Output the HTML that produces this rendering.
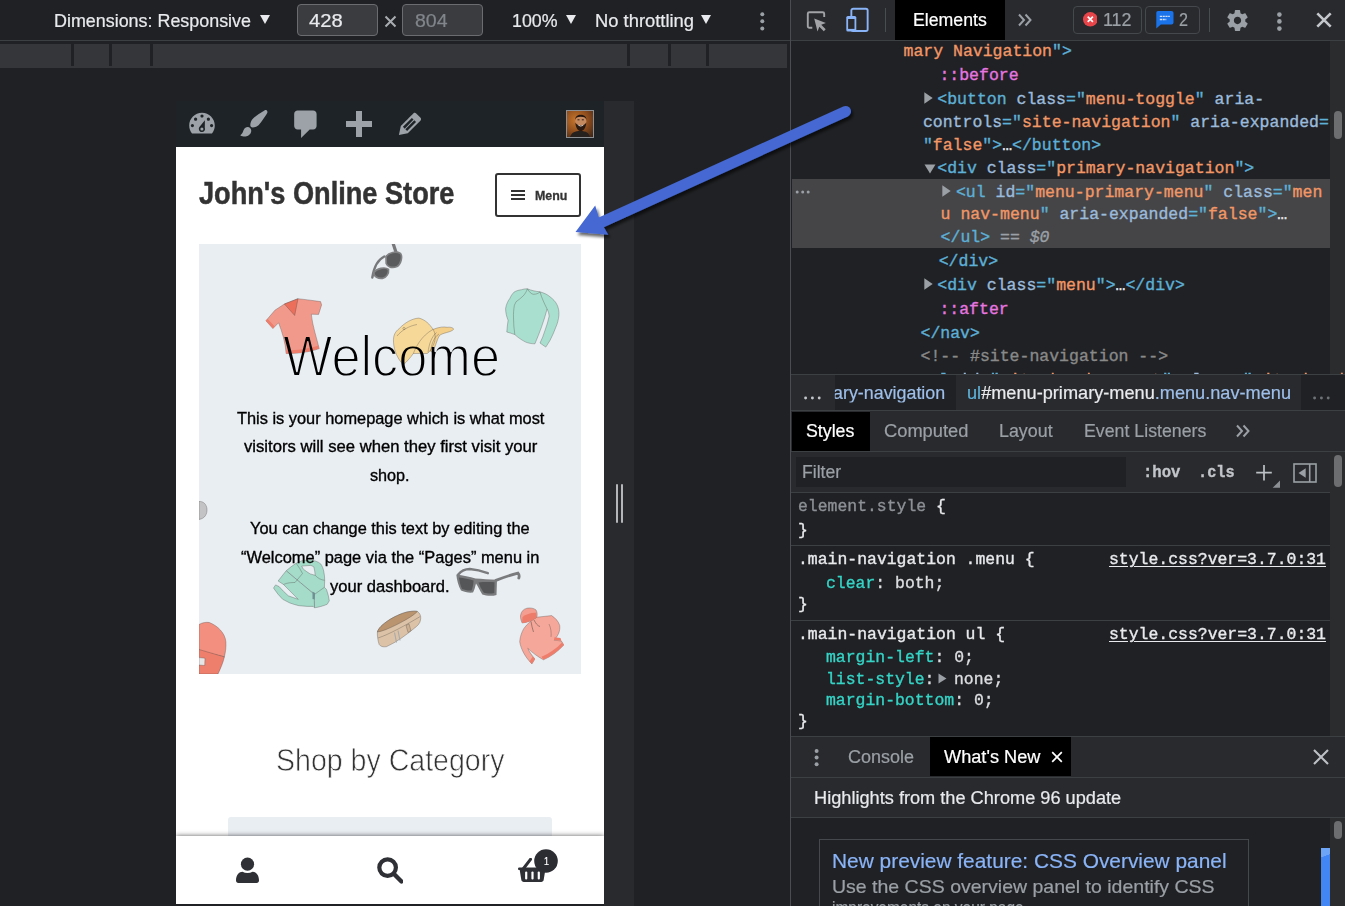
<!DOCTYPE html>
<html lang="en"><head><meta charset="utf-8"><title>DevTools</title>
<style>
*{box-sizing:border-box;margin:0;padding:0}
html,body{width:1345px;height:906px;overflow:hidden;background:#202124}
body{font-family:"Liberation Sans",sans-serif;position:relative}
#root{position:absolute;left:0;top:0;width:1345px;height:906px;overflow:hidden;background:#202124}
.a{position:absolute}
.t{position:absolute;white-space:pre;transform-origin:0 0;display:block}
.t i{font-style:normal}
.clip{position:absolute;left:0;top:0;width:1345px;overflow:hidden}
.tri{position:absolute;width:0;height:0;border-left:5.2px solid transparent;border-right:5.2px solid transparent;border-top:9px solid #e8eaed}
.inp{position:absolute;top:4px;height:32px;background:#3b3c3f;border:1px solid #6a6c70;border-radius:4px}
.hl{position:absolute;height:1px;background:#3c4043}
.t{line-height:1}
.s{font-family:"Liberation Sans",sans-serif;-webkit-text-stroke:0.2px}
.m{font-family:"Liberation Mono",monospace;-webkit-text-stroke:0.35px;margin-top:0.9px}

</style></head>
<body>
<div id="root">
<svg width="0" height="0" style="position:absolute"><defs>
<mask id="mw" maskUnits="userSpaceOnUse" x="0" y="0" width="1345" height="906"><text x="283" y="375.800" font-family="Liberation Sans, sans-serif" font-size="57.3" textLength="217" lengthAdjust="spacingAndGlyphs" fill="#fff" stroke="#000" stroke-width="1.900" stroke-linejoin="round">Welcome</text></mask>
<mask id="ms" maskUnits="userSpaceOnUse" x="0" y="0" width="1345" height="906"><text x="276" y="771.300" font-family="Liberation Sans, sans-serif" font-size="31.400" textLength="228.500" lengthAdjust="spacingAndGlyphs" fill="#fff" stroke="#000" stroke-width="0.850" stroke-linejoin="round">Shop by Category</text></mask>
</defs></svg>

<!-- ================= LEFT: device mode ================= -->
<div class="a" id="left" style="left:0;top:0;width:790px;height:906px;background:#202124"></div>
<div class="hl" style="left:0;top:40px;width:790px"></div>
<div class="a" style="left:790px;top:0;width:1px;height:906px;background:#494c50"></div>
<!-- toolbar widgets -->
<div class="tri" style="left:259.8px;top:15px"></div>
<div class="inp" style="left:297.4px;width:81px"></div>
<svg class="a" style="left:384px;top:15px" width="13" height="13" viewBox="0 0 13 13"><path d="M1.5 1.5L11.5 11.5M11.5 1.5L1.5 11.5" stroke="#a9acb1" stroke-width="2" fill="none"/></svg>
<div class="inp" style="left:402.4px;width:80.4px"></div>
<div class="tri" style="left:566px;top:15px"></div>
<div class="tri" style="left:701.3px;top:15px"></div>
<svg class="a" style="left:758px;top:10px" width="9" height="22" viewBox="0 0 9 22"><g fill="#9aa0a6"><circle cx="4.3" cy="4.3" r="2"/><circle cx="4.3" cy="11.2" r="2"/><circle cx="4.3" cy="18.4" r="2"/></g></svg>
<!-- media query bar -->
<div class="a" style="left:0;top:44px;width:787px;height:24px;background:#35363a"></div>
<div class="a" style="left:71px;top:44px;width:3px;height:22px;background:#202124"></div>
<div class="a" style="left:109px;top:44px;width:3px;height:22px;background:#202124"></div>
<div class="a" style="left:150px;top:44px;width:3px;height:22px;background:#202124"></div>
<div class="a" style="left:627.3px;top:44px;width:3px;height:22px;background:#202124"></div>
<div class="a" style="left:668.3px;top:44px;width:3px;height:22px;background:#202124"></div>
<div class="a" style="left:706.4px;top:44px;width:3px;height:22px;background:#202124"></div>

<!-- resizer strip -->
<div class="a" style="left:604px;top:101px;width:30px;height:805px;background:#292a2d"></div>
<div class="a" style="left:615.6px;top:484px;width:2px;height:39px;background:#b4b6b9;border-radius:1px"></div>
<div class="a" style="left:621.3px;top:484px;width:2px;height:39px;background:#b4b6b9;border-radius:1px"></div>

<!-- ================= device ================= -->
<div class="a" id="device" style="left:176px;top:101px;width:428px;height:803px;background:#fff;overflow:hidden">
  <!-- wp admin bar -->
  <div class="a" style="left:0;top:0;width:428px;height:46px;background:#1d2327"></div>
  <svg class="a" style="left:10.300000000000011px;top:7px;" width="32" height="32" viewBox="0 0 20 20"><path d="M3.76 16h12.48c1.1-1.37 1.76-3.11 1.76-5 0-4.42-3.58-8-8-8s-8 3.58-8 8c0 1.89.66 3.63 1.76 5zM10 4c.55 0 1 .45 1 1s-.45 1-1 1-1-.45-1-1 .45-1 1-1zM6 6c.55 0 1 .45 1 1s-.45 1-1 1-1-.45-1-1 .45-1 1-1zM14 6c.55 0 1 .45 1 1s-.45 1-1 1-1-.45-1-1 .45-1 1-1zM4 10c.55 0 1 .45 1 1s-.45 1-1 1-1-.45-1-1 .45-1 1-1zM16 10c.55 0 1 .45 1 1s-.45 1-1 1-1-.45-1-1 .45-1 1-1z" fill="#9ca2a7"/></svg><svg class="a" style="left:10.300000000000011px;top:7px;" width="32" height="32" viewBox="0 0 20 20"><path d="M11.800 7.700L11.750 12.300A1.950 1.950 0 1 1 8.250 12.100z" fill="#1d2327"/><circle cx="9.950" cy="13.150" r="0.950" fill="#9ca2a7"/></svg><svg class="a" style="left:61.900000000000006px;top:6.400000000000006px;" width="32" height="32" viewBox="0 0 20 20"><path d="M18.33 3.57s.27-.8-.31-1.36c-.53-.52-1.22-.24-1.22-.24-.61.3-5.76 3.47-7.67 5.57-.86.96-2.06 3.79-1.09 4.82.92.98 3.96-.17 4.79-1 2.060-2.060 5.21-7.170 5.5-7.790zM1.4 17.650c2.37-1.560 1.46-3.410 3.230-4.640.93-.65 2.220-.62 3.080.29.630.66.8 1.850.25 2.960-.38.780-1.160 1.630-2.610 2.060-.92.27-2.480.34-3.950-.67z" fill="#9ca2a7"/></svg><svg class="a" style="left:112.5px;top:5.700000000000003px;" width="34.5" height="34.5" viewBox="0 0 20 20"><path d="M5 2h9c1.1 0 2 .9 2 2v7c0 1.100-.9 2-2 2h-2l-5 5v-5h-2c-1.100 0-2-.9-2-2v-7c0-1.100.9-2 2-2z" fill="#9ca2a7"/></svg><svg class="a" style="left:162px;top:6.400000000000006px;" width="40" height="40" viewBox="0 0 20 20"><path d="M17 7v3h-5v5h-3v-5h-5v-3h5v-5h3v5h5z" fill="#9ca2a7"/></svg><svg class="a" style="left:218px;top:6.799999999999997px;" width="32" height="32" viewBox="0 0 20 20"><path d="M13.89 3.39l2.710 2.720c.46.46.42 1.240.030 1.640l-8.010 8.020-5.560 1.160 1.160-5.580s7.600-7.630 7.990-8.030c.39-.39 1.220-.39 1.680.07zM11.160 6.180l-5.590 5.610 1.110 1.110 5.540-5.650zM8.190 14.410l5.580-5.600-1.070-1.080-5.590 5.600z" fill="#9ca2a7"/></svg>
  <!-- avatar -->
  <svg class="a" style="left:390px;top:9px;" width="28" height="28" viewBox="0 0 28 28">
<defs><radialGradient id="avg" cx="0.35" cy="0.35" r="0.9"><stop offset="0" stop-color="#c9772c"/><stop offset="0.55" stop-color="#8a4a1c"/><stop offset="1" stop-color="#3a2416"/></radialGradient></defs>
<rect width="28" height="28" fill="#8c8f94"/><rect x="1" y="1" width="26" height="26" fill="url(#avg)"/>
<path d="M4 27c1.500-4.500 5-6 10.500-6s8.500 2 9.500 6z" fill="#26201f"/>
<ellipse cx="14.800" cy="11.500" rx="5.600" ry="6.800" fill="#c58a60"/>
<path d="M9.200 10c-.5-7 11.700-7 11.200 0-.4-2.300-2-3.300-5.600-3.300S9.600 7.700 9.200 10z" fill="#24150f"/>
<path d="M9.300 12.500c.4 6 3 8.500 5.500 8.500s5.100-2.500 5.500-8.500c-1.200 2-3 2.800-5.500 2.800s-4.300-.8-5.500-2.800z" fill="#2a1a12"/>
<path d="M12 14.800c1.800 1.100 3.800 1.100 5.600 0-1 2.300-4.600 2.300-5.600 0z" fill="#f4ebe4"/>
<path d="M11.500 9.800h2M15.800 9.800h2" stroke="#24150f" stroke-width=".9"/>
</svg>
  <!-- menu button -->
  <div class="a" style="left:319px;top:72px;width:86px;height:44px;border:2px solid #333;border-radius:3px"></div>
  <div class="a" style="left:335px;top:88.6px;width:14px;height:2.1px;background:#333"></div>
  <div class="a" style="left:335px;top:93px;width:14px;height:2.1px;background:#333"></div>
  <div class="a" style="left:335px;top:97.3px;width:14px;height:2.1px;background:#333"></div>
  <!-- hero -->
  <div class="a" id="hero" style="left:23px;top:143px;width:382px;height:430px;background:#e9eef3;overflow:hidden">
  <svg class="a" style="left:0;top:0" width="382" height="430" viewBox="0 0 382 430"><g>
<path d="M194.300 0L197.400 9.500" stroke="#77787a" stroke-width="3.200" stroke-linecap="round" fill="none"/>
<path d="M185.300 12.500C178 16 174.800 24 173.300 33.500" stroke="#77787a" stroke-width="2.400" stroke-linecap="round" fill="none"/>
<path d="M187 12.500C190 8.500 197 6.800 201.500 9.500 203.800 12.500 202 20 198 22.500 193 24.500 188.500 23 187.200 19.500z" fill="#5a5b5d" stroke="#808183" stroke-width="1.700"/>
<path d="M174.800 28.500C177.500 24.500 186 22.500 189.500 25.500 190 29.500 187.500 33.500 183.500 34.300 179.500 34.800 174.800 33 174.800 28.500z" fill="#5a5b5d" stroke="#808183" stroke-width="1.700"/>
</g><g>
<path d="M66.900 76.800L75.900 66.200 85.400 60 99 54.700 109 55.900 121.600 57.600 122.600 60.900 119.600 70.400 112.300 70.200C113.500 82 118 95 120.200 104.600 110 108.500 97 109.500 87.100 109.600 86.500 98 83 88 79.600 78.800L73.900 84.500z" fill="#f19a8c" stroke="#4a4440" stroke-opacity=".55" stroke-width=".6" stroke-linejoin="round"/>
<path d="M85.400 60L99 54.700 95.700 71.500z" fill="#ec6f5c" stroke="#4a4440" stroke-opacity=".55" stroke-width=".6" stroke-linejoin="round"/>
<path d="M87.100 109.600C97 109.500 110 108.500 120.200 104.600L119.300 101.500C110 105 97 106.300 87 106.300z" fill="#ee7d6b"/>
<path d="M66.900 76.800L73.900 84.500 75.800 82.600 68.500 74.800z" fill="#ee7d6b"/>
</g><g>
<path d="M234 85.400C240 83 245 82.500 248.200 83.300 252 82.800 254.800 84 254.500 85.400 252 88.500 244 88.500 240.500 91.500 237.500 96 237 103 233 108L226 104z" fill="#f3cf8a" stroke="#4a4440" stroke-opacity=".55" stroke-width=".6" stroke-linejoin="round"/>
<path d="M194.500 98.200C194 91 196.500 87.500 200.100 84.700 206 78.500 213 74.500 219.900 74.100 226 75.500 231 80.500 234 85.400 236.500 89 236.500 94 235.400 98.200 233.500 103 231.500 107 228.400 109.500L214.300 109.500C211.500 113.500 208 117.500 204.400 120.800 198.500 115 194.800 106 194.500 98.200z" fill="#f6d899" stroke="#4a4440" stroke-opacity=".55" stroke-width=".6" stroke-linejoin="round"/>
<path d="M214.300 109.500C217 103 222 92 234 85.400" fill="none" stroke="#4a4440" stroke-opacity=".55" stroke-width=".6" stroke-linejoin="round"/>
<path d="M198 92C203 86 210 82 218 80.500" fill="none" stroke="#4a4440" stroke-opacity=".55" stroke-width=".6" stroke-linejoin="round"/>
<path d="M231.500 107C233 99 235 93 240 90M229 108.500C230 100 232.500 93 237.500 88.500" fill="none" stroke="#4a4440" stroke-opacity=".55" stroke-width=".6" stroke-linejoin="round"/>
<circle cx="205" cy="84.500" r="1.100" fill="none" stroke="#4a4440" stroke-opacity=".55" stroke-width=".6" stroke-linejoin="round"/>
</g><g>
<path d="M328.400 44.800C332.500 46.500 337 47.500 341 47.800 345 49 348.500 50.500 351 52.800 354 55 356.300 57.500 357.800 60.300 359.500 63.500 360.200 67.500 359.900 71.300 359.500 75.500 358.500 79.500 356.900 83 355.300 87.500 353.300 92 351 96.400L346.800 103.100 341 99C343 95 344.700 90.800 346 86.400 347.800 81.500 349.300 76.800 350.200 72.100 350 69.500 349.300 67 348.100 65 345 77 340.500 89 335.900 99.800 332.500 99.800 329.500 99.200 326.700 98.100 322.500 96 319 93.500 315.800 90.600 313 89.500 310.300 88.700 307.800 88 308 84 308.600 80 309.100 76.300 307.500 72.500 306.600 68.500 306.600 64.500 307.300 60.500 308.800 57 310.800 54.500 311.800 52 313.200 50 314.900 48.200 317.200 46.800 319.800 46 322.500 45.700 324.500 45 326.500 44.700 328.400 44.800z" fill="#a9dfce" stroke="#4a4440" stroke-opacity=".55" stroke-width=".6" stroke-linejoin="round"/>
<path d="M328.400 44.800C327.500 47.500 326 50 324.200 51.900 322 54.200 319.300 56 317 57.800L315.400 61.200C314.700 65.500 314.300 69.700 314.500 73.800 314.500 79.500 315 85 315.800 90.600" fill="none" stroke="#4a4440" stroke-opacity=".55" stroke-width=".6" stroke-linejoin="round"/>
<path d="M341 47.800C341.800 51 343 54 344.300 57 345.500 59.800 346.800 62.500 348.100 65" fill="none" stroke="#4a4440" stroke-opacity=".55" stroke-width=".6" stroke-linejoin="round"/>
<path d="M328.400 44.800C330.500 48.200 332.300 50 334.300 50.300 337 50.300 339.500 49.500 341 47.800" fill="none" stroke="#4a4440" stroke-opacity=".55" stroke-width=".6" stroke-linejoin="round"/>
</g><path d="M0 257.500C4 257 7.500 260 8 265 8.300 270 6 274.500 0 275.500z" fill="#c3c3c5" stroke="#4a4440" stroke-opacity=".55" stroke-width=".6" stroke-linejoin="round"/><g>
<path d="M79.100 337L87.200 326.700C90.300 324 93.700 321.500 97.100 319.300L102.700 316.800C105.500 316.200 108.300 315.800 111.200 315.800L116.900 317.200C118.800 317.800 120.500 318.800 121.800 320 123.300 322.200 124.200 324.600 124.700 327.100 125.400 330 125.700 333.200 125.700 336.300L125.400 343.300 127.500 345.500C128.800 349.200 129.800 353 130.300 356.800L128.200 360.300C124 362 119.800 363.200 115.500 363.800L114.100 362.400H108.400L99.900 361.700C96.800 361 93.700 360 90.700 358.900L83.700 355.300C80.300 352 77.200 348.200 74.500 344L76.600 340.900 80.100 342.600C83 345.800 86 349 89.300 351.800L99.200 355.300 84.500 340.500 79.100 337z" fill="#a4dbc9" stroke="#4a4440" stroke-opacity=".55" stroke-width=".6" stroke-linejoin="round"/>
<path d="M102.700 322.100L111.900 321.400 114.800 322.800C115.500 325.500 116 328.300 116.200 331.300L111.200 329.900C108.800 328.500 106.400 326.800 104.200 325z" fill="#e9eef3" stroke="#4a4440" stroke-opacity=".55" stroke-width=".6" stroke-linejoin="round"/>
<path d="M87.200 326.700C96.500 334.500 106 342.500 115.500 350.400 115.300 354.500 115.300 359 115.500 363.800" fill="none" stroke="#8a9a97" stroke-width="1"/>
<path d="M97.100 319.300C99.500 322.500 101.800 325.800 103.500 329.500L96 338.500C92 338.500 88 338.800 84.500 340.500" fill="none" stroke="#4a4440" stroke-opacity=".55" stroke-width=".6" stroke-linejoin="round"/>
<path d="M116.200 331.300C119 334.500 122.300 336 125.700 336.300" fill="none" stroke="#4a4440" stroke-opacity=".55" stroke-width=".6" stroke-linejoin="round"/>
<path d="M115.500 350.400L125.400 343.300" fill="none" stroke="#4a4440" stroke-opacity=".55" stroke-width=".6" stroke-linejoin="round"/>
<path d="M113.500 347.500l2.500 1.500-.5 6.500-2-.5z" fill="#6f8f93"/>
</g><g>
<path d="M259.300 330.500C262 327 266.500 325 270.800 325 277 325.500 283 327 288.800 329.100" stroke="#7a7b7d" stroke-width="2.600" stroke-linecap="round" fill="none"/>
<path d="M296.900 336.400C304 333.500 311.500 331 319 329.100 320.300 330.500 320.300 332.500 319.800 334" stroke="#7a7b7d" stroke-width="2.800" stroke-linecap="round" fill="none"/>
<path d="M257.300 330.500C264 331.500 271 332.500 276.500 334.500 283 335 290 335.300 298 335.800L297.500 351C293 352.500 287 351.800 283.300 350.500 280.500 346 279 342 277 339.500 276 343 275.500 346 274 348.500 270 349 265 348 262 346.500 259.500 342 257.800 336 257.300 330.500z" fill="#7a7b7d"/>
<path d="M260 333.500C265 334 270 335 274.500 336.500 274.500 340.500 273.500 344 272.500 346.500 269 346.800 265.500 346 263 345 261.500 341.500 260.500 337.500 260 333.500z" fill="#555658"/>
<path d="M279.500 338.500C284.500 338 290 338 295.500 338.300L295.300 349C291.500 350 287.500 349.500 284.800 348.700 282.500 345.500 280.800 342 279.500 338.500z" fill="#555658"/>
</g><g>
<path d="M178.400 388C180 381 196 371 208 368 213 367 217 367 218.400 367.500 221 369 222 372 221.700 374.900 221.300 380 218 382 215 384.500 207 391 198 398 187.400 402.700 184 403.200 181.500 402.500 180.200 400.500 178.800 396.500 178.200 392 178.400 388z" fill="#dcc3a7" stroke="#4a4440" stroke-opacity=".55" stroke-width=".6" stroke-linejoin="round"/>
<path d="M178.400 388C180 381 196 371 208 368 213 367 217 367 218.400 367.500 214 372 205 377 197 381 190 384.500 183 387.500 178.400 388z" fill="#b9946f" stroke="#4a4440" stroke-opacity=".55" stroke-width=".6" stroke-linejoin="round"/>
<path d="M179 394C190 390.500 207 381 221.200 372.500" fill="none" stroke="#4a4440" stroke-opacity=".55" stroke-width=".6" stroke-linejoin="round"/>
<path d="M195.500 388.500L197.500 398.500M199 386.500L201 396.500" fill="none" stroke="#a7a9ac" stroke-width="1.100"/>
<path d="M207 381.500L209 388.500 212 386.800 210 379.800z" fill="#cdb092" stroke="#4a4440" stroke-opacity=".55" stroke-width=".6" stroke-linejoin="round"/>
</g><g>
<path d="M0 380.500C3.500 378.500 7 378 10.400 378.500 19 382 26 389 26.900 397.800 27.300 403 26.500 408 25.400 412.900L0 407z" fill="#f28f7e" stroke="#4a4440" stroke-opacity=".55" stroke-width=".6" stroke-linejoin="round"/>
<path d="M0 405.500L25.400 412.900C24 419 21.500 424.500 19 430L0 430z" fill="#ef7f6d" stroke="#4a4440" stroke-opacity=".55" stroke-width=".6" stroke-linejoin="round"/>
<path d="M0 413.600L6 414.200 5.700 421.500 0 421z" fill="#e6e6e6" stroke="#4a4440" stroke-opacity=".55" stroke-width=".6" stroke-linejoin="round"/>
</g><g>
<path d="M324.700 384.700C328 380 333 375.500 337.800 373.200L352.600 371.600C356.500 374 359.500 377.500 360.700 381.400 361.500 387 359 392 355 396.100L362.400 397 364.800 401C359 407.500 352 412.500 344.400 415.800 338.500 412.500 333 408.500 328.800 404.300 330.500 408.500 333.500 412 335.900 415L332.900 419.900C327 414 322 406 320.700 397.800 321 393 322.500 388.500 324.700 384.700z" fill="#f5a799" stroke="#4a4440" stroke-opacity=".55" stroke-width=".6" stroke-linejoin="round"/>
<path d="M321.500 371.600C322 367.500 324.500 365 328 364.200 331.500 363.500 335 364.300 337 365.900 338.500 368.500 338.300 371 337.800 373.200 333.500 376.500 328 378.500 323.100 379 322 376.500 321.300 374 321.500 371.600z" fill="#f39e90" stroke="#4a4440" stroke-opacity=".55" stroke-width=".6" stroke-linejoin="round"/>
<path d="M323.500 373C327 370.500 332 368.500 337 368.800L337.800 373.200C333.500 376.500 328 378.500 323.100 379z" fill="#ed7c6a"/>
<path d="M344.400 415.800C352 412.500 359 407.500 364.800 401L363.300 398.300C357.500 404.500 350.500 409.500 342.500 412.800z" fill="#ee7d6b"/>
<path d="M335.900 415L332.900 419.900 330.500 417.500 333.800 412.500z" fill="#ee7d6b"/>
<path d="M355 396.100L362.400 397 361.500 394 355.500 393.300z" fill="#ee7d6b"/>
<path d="M332 377.500C332.500 381 333.500 385 334.500 388M335 376C336.500 379 338.500 382 341 382.500" fill="none" stroke="#8c6a62" stroke-width=".8"/>
<path d="M350 380C352 384 352.500 389 352 393" fill="none" stroke="#4a4440" stroke-opacity=".55" stroke-width=".6" stroke-linejoin="round"/>
</g></svg>
  </div>
  <!-- category tile -->
  <div class="a" style="left:52px;top:716px;width:324px;height:30px;background:#e9eef3;border-radius:3px"></div>
  <!-- handheld footer bar -->
  <div class="a" style="left:0;top:735px;width:428px;height:68px;background:#fff;box-shadow:0 0 5px rgba(0,0,0,.65)"></div>
  <svg class="a" style="left:59.5px;top:756px;" width="23" height="26" viewBox="0 0 23 26"><circle cx="11.5" cy="7.200" r="6.600" fill="#2f3036"/><path d="M0 23.500c0-6 3.200-8.800 6.500-8.800 1.500.8 3.100 1.200 5 1.200s3.500-.4 5-1.200c3.300 0 6.500 2.800 6.500 8.800 0 1.400-1 2.500-2.400 2.500H2.400C1 26 0 24.900 0 23.500z" fill="#2f3036"/></svg><svg class="a" style="left:200.5px;top:756px;" width="26.5" height="26.5" viewBox="0 0 26.500 26.500"><circle cx="10.600" cy="10.600" r="8.300" fill="none" stroke="#2f3036" stroke-width="4.200"/><path d="M17 17l7.500 7.500" stroke="#2f3036" stroke-width="4.400" stroke-linecap="round"/></svg><svg class="a" style="left:341.5px;top:757px;" width="29" height="24" viewBox="0 0 29 24"><path d="M1.200 9.500h26.600c.8 0 1.200.6 1.200 1.300s-.5 1.300-1.200 1.300h-.5l-1.600 9.700c-.2 1.300-1.200 2.200-2.500 2.200H5.800c-1.300 0-2.300-.9-2.500-2.200L1.700 12.100h-.5C.5 12.100 0 11.500 0 10.800s.5-1.300 1.200-1.300z" fill="#2f3036"/>
<path d="M5.500 10.500L12.500 1.300" stroke="#2f3036" stroke-width="3" stroke-linecap="round"/>
<g stroke="#fff" stroke-width="2.200" stroke-linecap="round"><path d="M8.200 14.500v6"/><path d="M14.500 14.500v6"/><path d="M20.800 14.500v6"/></g></svg><svg class="a" style="left:358px;top:748px;" width="24" height="24" viewBox="0 0 24 24"><circle cx="12" cy="12" r="11.800" fill="#2c2d33"/></svg>
</div>

<!-- ================= RIGHT: devtools ================= -->
<div class="a" style="left:791px;top:0;width:554px;height:40px;background:#292a2d"></div>
<div class="hl" style="left:791px;top:40px;width:554px"></div>
<svg class="a" style="left:806px;top:10px;" width="22" height="22" viewBox="0 0 22 22"><path d="M6.300 17.700H3.300c-.9 0-1.500-.6-1.500-1.500V3.700c0-.9.600-1.500 1.500-1.500h13.400c.9 0 1.500.6 1.500 1.500v3.400" fill="none" stroke="#a1a3a6" stroke-width="1.900"/><path d="M8.200 8.500l11.700 4.500-4.700 1.800 4.500 4.500-1.900 1.900-4.500-4.500-1.800 4.700z" fill="#a1a3a6"/></svg><svg class="a" style="left:845px;top:7px;" width="25" height="26" viewBox="0 0 25 26"><rect x="6.350" y="1.750" width="16.300" height="22.300" rx="1.800" fill="none" stroke="#8ab4f8" stroke-width="1.900"/><rect x="1.300" y="9" width="10" height="15.600" rx="1.600" fill="#8ab4f8"/><rect x="3.100" y="12" width="6.400" height="9.900" fill="#292a2d"/></svg><div class="a" style="left:885px;top:8px;width:1px;height:24px;background:#494c50"></div><svg class="a" style="left:1017px;top:13px;" width="16" height="14" viewBox="0 0 16 14"><path d="M2 1.500l5 5.500-5 5.500M8.500 1.500l5 5.500-5 5.500" fill="none" stroke="#9aa0a6" stroke-width="2"/></svg><div class="a" style="left:1073px;top:6px;width:68.500px;height:27.500px;border:1px solid #45484c;border-radius:4px"></div><svg class="a" style="left:1082.5px;top:12.2px;" width="14.6" height="14.6" viewBox="0 0 14.600 14.600"><circle cx="7.300" cy="7.300" r="7.300" fill="#e8454a"/><path d="M4.700 4.700l5.200 5.200M9.900 4.700l-5.200 5.200" stroke="#fff" stroke-width="1.700"/></svg><div class="a" style="left:1145px;top:6px;width:54.700px;height:27.500px;border:1px solid #45484c;border-radius:4px"></div><svg class="a" style="left:1156px;top:10.9px;" width="17.5" height="18" viewBox="0 0 17.500 18"><path d="M2 0h13.500c1.100 0 2 .9 2 2v9.500c0 1.100-.9 2-2 2H4.800L.3 17.500V2C.3.900 1 0 2 0z" fill="#1a73e8"/><path d="M3.800 5.300h10M3.800 8.500h6.500" stroke="#cfe0fb" stroke-width="1.300" stroke-dasharray="2.200 .6"/></svg><div class="a" style="left:1209px;top:8px;width:1px;height:24px;background:#494c50"></div><svg class="a" style="left:1224.6px;top:7.6px;" width="25" height="25" viewBox="0 0 24 24"><path fill="#9aa0a6" d="M19.430 12.980c.04-.32.070-.64.070-.98s-.03-.66-.07-.98l2.110-1.650c.19-.15.240-.42.120-.64l-2-3.460c-.12-.22-.39-.3-.61-.22l-2.490 1c-.52-.4-1.080-.73-1.690-.98l-.38-2.650C14.460 2.180 14.250 2 14 2h-4c-.25 0-.46.180-.49.420l-.38 2.650c-.61.250-1.170.59-1.690.98l-2.490-1c-.23-.09-.49 0-.61.220l-2 3.460c-.13.220-.07.490.12.640l2.110 1.650c-.04.320-.07.650-.07.980s.03.660.07.980l-2.110 1.650c-.19.150-.24.420-.12.640l2 3.460c.12.220.39.300.61.220l2.490-1c.52.400 1.080.73 1.690.98l.38 2.650c.03.240.24.420.49.420h4c.25 0 .46-.18.490-.42l.38-2.650c.61-.25 1.170-.59 1.690-.98l2.490 1c.23.090.49 0 .61-.22l2-3.460c.12-.22.070-.49-.12-.64l-2.110-1.650zM12 15.500c-1.930 0-3.500-1.570-3.500-3.500s1.570-3.500 3.500-3.500 3.500 1.570 3.500 3.500-1.570 3.500-3.500 3.500z"/></svg><svg class="a" style="left:1275px;top:10px;" width="9" height="24" viewBox="0 0 9 24"><g fill="#9aa0a6"><circle cx="4.400" cy="4.600" r="2.300"/><circle cx="4.400" cy="11.400" r="2.300"/><circle cx="4.400" cy="18.600" r="2.300"/></g></svg><svg class="a" style="left:1313.7px;top:10.2px;" width="20" height="20" viewBox="0 0 20 20"><path d="M3.300 3.300l13.400 13.400M16.700 3.300l-13.400 13.400" stroke="#c4c7cc" stroke-width="2.600" fill="none"/></svg>
<div class="a" style="left:895px;top:0;width:110px;height:39.5px;background:#000"></div>

<!-- elements tree -->
<div class="a" style="left:1330px;top:41px;width:15px;height:333px;background:#2b2c2e"></div>
<div class="a" style="left:1334px;top:111px;width:8px;height:28px;background:#6d6e70;border-radius:4px"></div>
<div class="a" style="left:792px;top:179px;width:538px;height:68.5px;background:#454547"></div>
<svg class="a" style="left:794px;top:189px" width="18" height="6" viewBox="0 0 18 6"><g fill="#9aa0a6"><circle cx="3.2" cy="3" r="1.5"/><circle cx="8.7" cy="3" r="1.5"/><circle cx="14.2" cy="3" r="1.5"/></g></svg>
<svg class="a" style="left:924.2px;top:92.2px;" width="9" height="12" viewBox="0 0 9 12"><path d="M0.300 0.300L8.700 6 0.300 11.700z" fill="#9aa0a6"/></svg><svg class="a" style="left:924.2px;top:163.5px;" width="12" height="10" viewBox="0 0 12 10"><path d="M0.500 0.500h11L6 9.500z" fill="#9aa0a6"/></svg><svg class="a" style="left:941.7px;top:184.89999999999998px;" width="9" height="12" viewBox="0 0 9 12"><path d="M0.300 0.300L8.700 6 0.300 11.700z" fill="#9aa0a6"/></svg><svg class="a" style="left:924.2px;top:278.2px;" width="9" height="12" viewBox="0 0 9 12"><path d="M0.300 0.300L8.700 6 0.300 11.700z" fill="#9aa0a6"/></svg>
<div class="clip" style="height:374px"><span class="t m" style="left:903.50px;top:43.35px;font-size:16.5px;color:#e8eaed;"><i style="color:#f29766">mary Navigation</i><i style="color:#5db0d7">"&gt;</i></span>
<span class="t m" style="left:939.40px;top:67.35px;font-size:16.5px;color:#e8eaed;"><i style="color:#e776e0">::before</i></span>
<span class="t m" style="left:937.30px;top:91.35px;font-size:16.5px;color:#e8eaed;"><i style="color:#5db0d7">&lt;button</i><i style="color:#9bbbdc"> class</i><i style="color:#5db0d7">="</i><i style="color:#f29766">menu-toggle</i><i style="color:#5db0d7">"</i><i style="color:#9bbbdc"> aria-</i></span>
<span class="t m" style="left:922.90px;top:114.35px;font-size:16.5px;color:#e8eaed;"><i style="color:#9bbbdc">controls</i><i style="color:#5db0d7">="</i><i style="color:#f29766">site-navigation</i><i style="color:#5db0d7">"</i><i style="color:#9bbbdc"> aria-expanded</i><i style="color:#5db0d7">=</i></span>
<span class="t m" style="left:922.90px;top:136.85px;font-size:16.5px;color:#e8eaed;"><i style="color:#5db0d7">"</i><i style="color:#f29766">false</i><i style="color:#5db0d7">"&gt;</i><i style="color:#e8eaed">…</i><i style="color:#5db0d7">&lt;/button&gt;</i></span>
<span class="t m" style="left:937.30px;top:160.35px;font-size:16.5px;color:#e8eaed;"><i style="color:#5db0d7">&lt;div</i><i style="color:#9bbbdc"> class</i><i style="color:#5db0d7">="</i><i style="color:#f29766">primary-navigation</i><i style="color:#5db0d7">"&gt;</i></span>
<span class="t m" style="left:955.90px;top:183.95px;font-size:16.5px;color:#e8eaed;"><i style="color:#5db0d7">&lt;ul</i><i style="color:#9bbbdc"> id</i><i style="color:#5db0d7">="</i><i style="color:#f29766">menu-primary-menu</i><i style="color:#5db0d7">"</i><i style="color:#9bbbdc"> class</i><i style="color:#5db0d7">="</i><i style="color:#f29766">men</i></span>
<span class="t m" style="left:940.60px;top:206.35px;font-size:16.5px;color:#e8eaed;"><i style="color:#f29766">u nav-menu</i><i style="color:#5db0d7">"</i><i style="color:#9bbbdc"> aria-expanded</i><i style="color:#5db0d7">="</i><i style="color:#f29766">false</i><i style="color:#5db0d7">"&gt;</i><i style="color:#e8eaed">…</i></span>
<span class="t m" style="left:940.60px;top:228.85px;font-size:16.5px;color:#e8eaed;"><i style="color:#5db0d7">&lt;/ul&gt;</i><i style="color:#9aa0a6"> == </i><i style="color:#9aa0a6;font-style:italic">$0</i></span>
<span class="t m" style="left:938.70px;top:252.85px;font-size:16.5px;color:#e8eaed;"><i style="color:#5db0d7">&lt;/div&gt;</i></span>
<span class="t m" style="left:937.30px;top:277.35px;font-size:16.5px;color:#e8eaed;"><i style="color:#5db0d7">&lt;div</i><i style="color:#9bbbdc"> class</i><i style="color:#5db0d7">="</i><i style="color:#f29766">menu</i><i style="color:#5db0d7">"&gt;</i><i style="color:#e8eaed">…</i><i style="color:#5db0d7">&lt;/div&gt;</i></span>
<span class="t m" style="left:939.40px;top:301.35px;font-size:16.5px;color:#e8eaed;"><i style="color:#e776e0">::after</i></span>
<span class="t m" style="left:920.50px;top:324.75px;font-size:16.5px;color:#e8eaed;"><i style="color:#5db0d7">&lt;/nav&gt;</i></span>
<span class="t m" style="left:920.50px;top:348.35px;font-size:16.5px;color:#e8eaed;"><i style="color:#898989">&lt;!-- #site-navigation --&gt;</i></span>
<span class="t m" style="left:919.00px;top:372.15px;font-size:16.5px;color:#e8eaed;transform:scaleX(1.0219);"><i style="color:#5db0d7">&lt;ul</i><i style="color:#9bbbdc"> id</i><i style="color:#5db0d7">="</i><i style="color:#f29766">site-header-cart</i><i style="color:#5db0d7">"</i><i style="color:#9bbbdc"> class</i><i style="color:#5db0d7">="</i><i style="color:#f29766">site-header-</i></span>
</div>

<!-- breadcrumbs -->
<div class="hl" style="left:791px;top:374px;width:554px"></div>
<div class="a" style="left:791px;top:375px;width:554px;height:35px;background:#292a2d"></div>
<div class="a" style="left:835px;top:375px;width:121px;height:35px;background:#202124"></div>
<div class="a" style="left:1301px;top:375px;width:44px;height:35px;background:#202124"></div>
<svg class="a" style="left:803px;top:395px" width="20" height="6" viewBox="0 0 20 6"><g fill="#c4c7cc"><circle cx="2.6" cy="3" r="1.45"/><circle cx="9.4" cy="3" r="1.45"/><circle cx="16.2" cy="3" r="1.45"/></g></svg>
<svg class="a" style="left:1312px;top:395px" width="20" height="6" viewBox="0 0 20 6"><g fill="#6f7378"><circle cx="2.6" cy="3" r="1.45"/><circle cx="9.4" cy="3" r="1.45"/><circle cx="16.2" cy="3" r="1.45"/></g></svg>
<div class="hl" style="left:791px;top:410px;width:554px"></div>

<!-- styles tabs -->
<div class="a" style="left:791px;top:411px;width:554px;height:40px;background:#292a2d"></div>
<div class="a" style="left:792px;top:412px;width:78px;height:39px;background:#000"></div>
<div class="hl" style="left:791px;top:451px;width:554px"></div>
<!-- filter row -->
<div class="a" style="left:791px;top:452px;width:539px;height:40px;background:#292a2d"></div>
<div class="a" style="left:796px;top:457px;width:330px;height:30px;background:#202124"></div>
<div class="hl" style="left:791px;top:492px;width:539px"></div>
<svg class="a" style="left:1255px;top:463.5px;" width="27" height="25" viewBox="0 0 27 25"><path d="M9 1v15.500M1.200 8.700h15.600" stroke="#bdc1c6" stroke-width="1.700" fill="none"/><path d="M25 16.500v7.300h-7.300z" fill="#8d9196"/></svg><svg class="a" style="left:1293px;top:463px;" width="24" height="20" viewBox="0 0 24 20"><rect x="1" y="1" width="22" height="18" fill="none" stroke="#9aa0a6" stroke-width="1.600"/><path d="M16.700 1v18" stroke="#9aa0a6" stroke-width="1.600"/><path d="M12.700 5.200v9.600L5.500 10z" fill="#9aa0a6"/></svg><svg class="a" style="left:1234.5px;top:424px;" width="16" height="14" viewBox="0 0 16 14"><path d="M2 1.500l5 5.500-5 5.500M8.500 1.500l5 5.500-5 5.500" fill="none" stroke="#9aa0a6" stroke-width="2"/></svg>
<!-- styles scroll -->
<div class="a" style="left:1330px;top:452px;width:15px;height:284px;background:#2b2c2e"></div>
<div class="a" style="left:1334px;top:455px;width:8px;height:32px;background:#6d6e70;border-radius:4px"></div>
<div class="hl" style="left:791px;top:545px;width:539px"></div>
<div class="hl" style="left:791px;top:620px;width:539px"></div>
<svg class="a" style="left:938px;top:672.5px" width="9" height="11" viewBox="0 0 9 11"><path d="M0.5 0.5L8.5 5.5L0.5 10.5z" fill="#9aa0a6"/></svg>

<!-- drawer -->
<div class="hl" style="left:791px;top:736px;width:554px"></div>
<div class="a" style="left:791px;top:737px;width:554px;height:40px;background:#292a2d"></div>
<div class="a" style="left:930px;top:737px;width:141px;height:39px;background:#000"></div>
<svg class="a" style="left:812px;top:746px" width="9" height="22" viewBox="0 0 9 22"><g fill="#9aa0a6"><circle cx="4.6" cy="5" r="2"/><circle cx="4.6" cy="11.6" r="2"/><circle cx="4.6" cy="18.2" r="2"/></g></svg>
<svg class="a" style="left:1050px;top:750px" width="14" height="14" viewBox="0 0 14 14"><path d="M2.2 2.2L11.8 11.8M11.8 2.2L2.2 11.8" stroke="#fff" stroke-width="1.7" fill="none"/></svg>
<svg class="a" style="left:1312px;top:748px" width="18" height="18" viewBox="0 0 18 18"><path d="M2 2L16 16M16 2L2 16" stroke="#bdc1c6" stroke-width="2.1" fill="none"/></svg>
<div class="hl" style="left:791px;top:777px;width:554px"></div>
<div class="a" style="left:791px;top:778px;width:554px;height:39px;background:#292a2d"></div>
<div class="hl" style="left:791px;top:817px;width:554px"></div>
<div class="a" style="left:1330px;top:818px;width:15px;height:88px;background:#2b2c2e"></div>
<div class="a" style="left:1334px;top:821px;width:8px;height:18px;background:#6d6e70;border-radius:4px"></div>
<div class="a" style="left:819px;top:839px;width:430px;height:80px;border:1px solid #45484c"></div>
<div class="a" style="left:1321px;top:848px;width:9px;height:60px;background:#4285f4"></div>
<div class="a" style="left:1321px;top:848px;width:9px;height:20px;background:linear-gradient(160deg,#6ea4f8 40%,#4285f4 41%)"></div>

<svg class="a" style="left:0;top:0" width="1345" height="906" viewBox="0 0 1345 906"><rect x="270" y="320" width="240" height="70" fill="#000" mask="url(#mw)"/><rect x="265" y="735" width="250" height="50" fill="#333" mask="url(#ms)"/></svg>
<span class="t s" style="left:54.40px;top:12.80px;font-size:17.6px;color:#e8eaed;transform:scaleX(1.0174);">Dimensions: Responsive</span>
<span class="t s" style="left:309.30px;top:12.80px;font-size:17.6px;color:#e8eaed;transform:scaleX(1.1478);">428</span>
<span class="t s" style="left:415.00px;top:12.80px;font-size:17.6px;color:#80868b;transform:scaleX(1.1104);">804</span>
<span class="t s" style="left:511.50px;top:12.80px;font-size:17.6px;color:#e8eaed;transform:scaleX(1.0111);">100%</span>
<span class="t s" style="left:594.80px;top:12.80px;font-size:17.6px;color:#e8eaed;transform:scaleX(1.0437);">No throttling</span>
<span class="t s" style="left:199.40px;top:177.59px;font-size:31.2px;color:#333;font-weight:700;transform:scaleX(0.8707);-webkit-text-stroke:0.5px;">John's Online Store</span>
<span class="t s" style="left:534.60px;top:189.96px;font-size:12.8px;color:#333;font-weight:700;transform:scaleX(0.9694);-webkit-text-stroke:0.3px;">Menu</span>
<span class="t s" style="left:236.60px;top:409.80px;font-size:16.3px;color:#000;transform:scaleX(1.0050);-webkit-text-stroke:0.35px;">This is your homepage which is what most</span>
<span class="t s" style="left:244.00px;top:438.20px;font-size:16.3px;color:#000;transform:scaleX(1.0226);-webkit-text-stroke:0.35px;">visitors will see when they first visit your</span>
<span class="t s" style="left:370.00px;top:467.20px;font-size:16.3px;color:#000;transform:scaleX(0.9939);-webkit-text-stroke:0.35px;">shop.</span>
<span class="t s" style="left:250.40px;top:520.20px;font-size:16.3px;color:#000;transform:scaleX(1.0050);-webkit-text-stroke:0.35px;">You can change this text by editing the</span>
<span class="t s" style="left:241.00px;top:549.20px;font-size:16.3px;color:#000;transform:scaleX(1.0094);-webkit-text-stroke:0.35px;">“Welcome” page via the “Pages” menu in</span>
<span class="t s" style="left:330.00px;top:577.70px;font-size:16.3px;color:#000;transform:scaleX(1.0164);-webkit-text-stroke:0.35px;">your dashboard.</span>
<span class="t s" style="left:543.60px;top:855.77px;font-size:11.5px;color:#fff;transform:scaleX(0.7805);">1</span>
<span class="t s" style="left:912.60px;top:11.70px;font-size:17.6px;color:#fff;transform:scaleX(1.0062);">Elements</span>
<span class="t s" style="left:1103.00px;top:11.60px;font-size:17.6px;color:#9aa0a6;transform:scaleX(1.0156);">112</span>
<span class="t s" style="left:1179.00px;top:11.60px;font-size:17.6px;color:#9aa0a6;transform:scaleX(0.9187);">2</span>
<span class="t s" style="left:833.40px;top:385.00px;font-size:17.6px;color:#e8eaed;transform:scaleX(1.0152);clip-path:inset(0 0 0 1.800px);"><i style="color:#9dbfea">ary-navigation</i></span>
<span class="t s" style="left:967.00px;top:385.00px;font-size:17.6px;color:#e8eaed;transform:scaleX(1.0322);"><i style="color:#5db0d7">ul</i><i style="color:#e8eaed">#menu-primary-menu</i><i style="color:#9dbfea">.menu.nav-menu</i></span>
<span class="t s" style="left:806.00px;top:423.00px;font-size:17.6px;color:#fff;transform:scaleX(1.0100);">Styles</span>
<span class="t s" style="left:884.00px;top:423.00px;font-size:17.6px;color:#9aa0a6;transform:scaleX(1.0396);">Computed</span>
<span class="t s" style="left:999.40px;top:423.00px;font-size:17.6px;color:#9aa0a6;transform:scaleX(1.0146);">Layout</span>
<span class="t s" style="left:1083.60px;top:423.00px;font-size:17.6px;color:#9aa0a6;transform:scaleX(1.0092);">Event Listeners</span>
<span class="t s" style="left:802.40px;top:464.00px;font-size:17.6px;color:#9aa0a6;transform:scaleX(1.0023);">Filter</span>
<span class="t m" style="left:1142.60px;top:463.65px;font-size:16.5px;color:#c2c5ca;font-weight:700;transform:scaleX(0.9442);">:hov</span>
<span class="t m" style="left:1198.00px;top:463.65px;font-size:16.5px;color:#c2c5ca;font-weight:700;transform:scaleX(0.9240);">.cls</span>
<span class="t m" style="left:797.60px;top:497.95px;font-size:16.5px;color:#e8eaed;transform:scaleX(0.9956);"><i style="color:#8d9196">element.style</i><i style="color:#e8eaed"> {</i></span>
<span class="t m" style="left:797.60px;top:522.35px;font-size:16.5px;color:#e8eaed;transform:scaleX(0.9953);">}</span>
<span class="t m" style="left:797.60px;top:551.35px;font-size:16.5px;color:#e8eaed;transform:scaleX(0.9958);">.main-navigation .menu {</span>
<span class="t m" style="left:825.60px;top:574.75px;font-size:16.5px;color:#e8eaed;transform:scaleX(0.9957);"><i style="color:#35d4c7">clear</i><i style="color:#dcdee1">: both;</i></span>
<span class="t m" style="left:797.60px;top:596.35px;font-size:16.5px;color:#e8eaed;transform:scaleX(0.9953);">}</span>
<span class="t m" style="left:797.60px;top:626.35px;font-size:16.5px;color:#e8eaed;transform:scaleX(0.9958);">.main-navigation ul {</span>
<span class="t m" style="left:825.60px;top:649.35px;font-size:16.5px;color:#e8eaed;transform:scaleX(0.9958);"><i style="color:#35d4c7">margin-left</i><i style="color:#dcdee1">: 0;</i></span>
<span class="t m" style="left:825.60px;top:670.95px;font-size:16.5px;color:#e8eaed;transform:scaleX(0.9956);"><i style="color:#35d4c7">list-style</i><i style="color:#dcdee1">:</i></span>
<span class="t m" style="left:954.00px;top:670.95px;font-size:16.5px;color:#e8eaed;transform:scaleX(0.9956);"><i style="color:#dcdee1">none;</i></span>
<span class="t m" style="left:825.60px;top:692.35px;font-size:16.5px;color:#e8eaed;transform:scaleX(0.9957);"><i style="color:#35d4c7">margin-bottom</i><i style="color:#dcdee1">: 0;</i></span>
<span class="t m" style="left:797.60px;top:712.85px;font-size:16.5px;color:#e8eaed;transform:scaleX(0.9953);">}</span>
<span class="t m" style="left:1109.00px;top:551.35px;font-size:16.5px;color:#e8eaed;transform:scaleX(0.9961);text-decoration:underline;text-underline-offset:2px;">style.css?ver=3.7.0:31</span>
<span class="t m" style="left:1109.00px;top:626.35px;font-size:16.5px;color:#e8eaed;transform:scaleX(0.9961);text-decoration:underline;text-underline-offset:2px;">style.css?ver=3.7.0:31</span>
<span class="t s" style="left:848.00px;top:749.00px;font-size:17.6px;color:#9aa0a6;transform:scaleX(1.0223);">Console</span>
<span class="t s" style="left:944.00px;top:749.00px;font-size:17.6px;color:#fff;transform:scaleX(1.0331);">What's New</span>
<span class="t s" style="left:814.40px;top:790.00px;font-size:17.6px;color:#e8eaed;transform:scaleX(1.0333);">Highlights from the Chrome 96 update</span>
<span class="t s" style="left:832.40px;top:850.12px;font-size:21px;color:#8ab4f8;transform:scaleX(0.9943);">New preview feature: CSS Overview panel</span>
<span class="t s" style="left:832.40px;top:878.49px;font-size:18.2px;color:#9aa0a6;transform:scaleX(1.0721);">Use the CSS overview panel to identify CSS</span>
<span class="t s" style="left:832.40px;top:899.49px;font-size:18.2px;color:#9aa0a6;transform:scaleX(0.8498);">improvements on your page</span>


<!-- annotation arrow -->
<svg class="a" style="left:540px;top:80px;overflow:visible" width="340" height="190" viewBox="540 80 340 190">
<defs><filter id="ash" x="-10%" y="-20%" width="120%" height="150%"><feGaussianBlur in="SourceAlpha" stdDeviation="1.600"/><feOffset dx="1.500" dy="2.500"/><feComponentTransfer><feFuncA type="linear" slope="0.600"/></feComponentTransfer><feMerge><feMergeNode/><feMergeNode in="SourceGraphic"/></feMerge></filter></defs>
<g filter="url(#ash)" fill="#4468d3" stroke="none">
<path d="M845.500 111.400L601 222.500" stroke="#4468d3" stroke-width="11" stroke-linecap="round" fill="none"/>
<path d="M575.500 232L595.200 205.400L599.500 219.500L608.300 234.700z"/>
</g></svg>
</div>

</body></html>
